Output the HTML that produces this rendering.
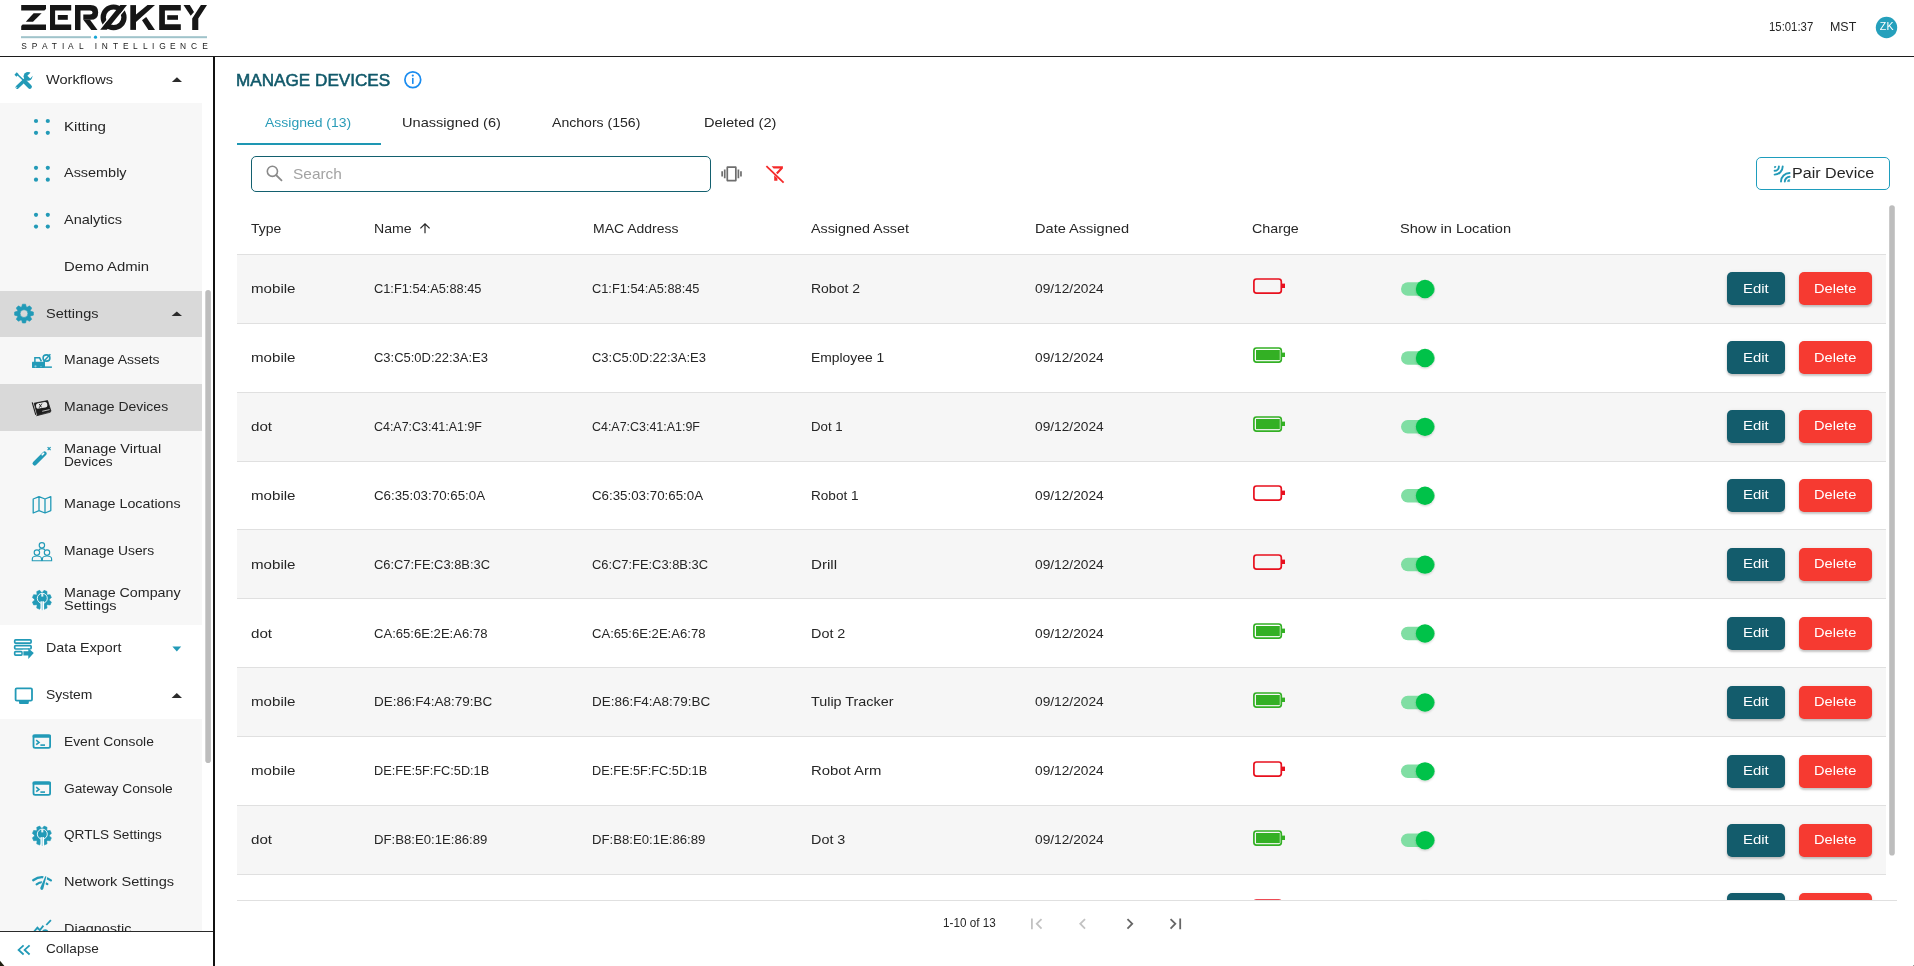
<!DOCTYPE html>
<html><head><meta charset="utf-8"><title>Manage Devices</title>
<style>
html,body{margin:0;padding:0;}
body{width:1914px;height:966px;overflow:hidden;position:relative;background:#fff;font-family:"Liberation Sans",sans-serif;}
.t{position:absolute;white-space:nowrap;line-height:20px;transform-origin:0 0;}
.btn{position:absolute;border-radius:5px;box-shadow:0 2px 2px rgba(0,0,0,0.18),0 1px 4px rgba(0,0,0,0.10);}
#main-clip{position:absolute;left:0;top:0;width:1914px;height:966px;}
</style></head><body>
<svg width="1914" height="966" viewBox="0 0 1914 966" style="position:absolute;left:0;top:0;will-change:transform">
<defs><clipPath id="tblclip"><rect x="0" y="0" width="1914" height="900"/></clipPath><clipPath id="clipdiag"><rect x="0" y="900" width="202" height="31"/></clipPath>
<filter id="sh" x="-50%" y="-50%" width="200%" height="200%"><feDropShadow dx="0" dy="1" stdDeviation="0.8" flood-color="#000" flood-opacity="0.2"/></filter></defs>
<g fill="#161616"><path d="M21.2 5.1H46V9L44.4 10.6H21.2Z"/><path d="M33.6 13.2H41.6L33 21.8H25.8Z"/><path d="M22.6 24.4H46V29.9H21.2V25.9Z"/><path d="M50 5.1H71.2V10.6H55.1V24.4H71.2V29.9H50Z"/><path d="M57.8 15H67.8V19.8H57.8Z"/><path d="M75 5.1H90.5Q98.2 5.1 98.2 12.4Q98.2 19.8 90.5 19.8H83.3V14.4H90Q92.6 14.4 92.6 12.5Q92.6 10.6 90 10.6H80.5V29.9H75Z"/><path d="M83.3 19.8H90L97.5 29.9H91.3Z"/><path fill-rule="evenodd" d="M113.6 4.55A13 12.85 0 1 1 113.6 30.25A13 12.85 0 1 1 113.6 4.55ZM113.6 9.5A7.75 7.75 0 1 0 113.6 25A7.75 7.75 0 1 0 113.6 9.5Z"/><path d="M98.2 29.9H100.2L114.2 12.8H112.2Z" fill="#fff"/><path d="M127 5.1H129L115.2 22H113.2Z" fill="#fff"/><path d="M120.3 5.1H127L106.9 29.75H100.2Z"/><path d="M130.3 5.1H136V29.9H130.3Z"/><path d="M136 14.6L147.5 5.1H155L136 22Z"/><path d="M142 20.3L146.2 17.1L155 29.9H148.4Z"/><path d="M159.2 5.1H180.8V10.6H164.9V24.3H180.8V29.9H159.2Z"/><path d="M167.2 15.2H178V19.8H167.2Z"/><path d="M183.5 5.1H189.8L194 12.1L190.7 15.8Z"/><path d="M200.9 5.1H207L198.3 18.5V29.9H192.2V18.5Z"/></g><rect x="21" y="36.2" width="70" height="2" fill="#9fc3ca"/><circle cx="95.5" cy="37.2" r="1.6" fill="#14a5d6"/><rect x="100" y="36.2" width="107" height="2" fill="#9fc3ca"/><text x="21.2 31.8 41.9 51.7 62 68 79 94.8 101.7 112.9 123.1 133 143 152 159.2 170 180 191 202.2" y="49" font-family="Liberation Sans" font-size="8.4" fill="#222">SPATIALINTELLIGENCE</text><rect x="0" y="56" width="1914" height="1" fill="#1c1c1c"/><circle cx="1886.5" cy="27.5" r="10.7" fill="#25a0bc"/><text x="1886.8" y="29.8" font-family="Liberation Sans" font-size="10.6" fill="#fff" text-anchor="middle" letter-spacing="0.3">ZK</text><rect x="0" y="103" width="202" height="188" fill="#f7f7f7"/><rect x="0" y="291" width="202" height="46" fill="#d9d9d9"/><rect x="0" y="337" width="202" height="288" fill="#f7f7f7"/><rect x="0" y="384" width="202" height="47" fill="#d9d9d9"/><rect x="0" y="719" width="202" height="212" fill="#f7f7f7"/><rect x="205.3" y="290" width="5.6" height="473" rx="2.8" fill="#bdbdbd"/><rect x="213" y="57" width="2" height="909" fill="#111"/><rect x="0" y="931" width="213" height="1" fill="#2a2a2a"/><rect x="0" y="932" width="213" height="34" fill="#fff"/><g stroke="#229ab7" stroke-linecap="round" fill="none"><path d="M18 75L24.5 81.3" stroke-width="1.6"/><path d="M15.6 73.5L17.6 75.5" stroke-width="3.2" stroke-linecap="butt"/><path d="M25.6 82.6L29.8 86.8" stroke-width="4.2"/><path d="M17.2 87.2L25.4 79.4" stroke-width="3.4"/></g><circle cx="28" cy="76.3" r="4.4" fill="#229ab7"/><path d="M27.4 75.8L31.2 72L34 74.6L30.2 78.6Z" fill="#fff"/><circle cx="16.6" cy="87.4" r="0.7" fill="#9fd3e0"/><path d="M171.9 82L176.95 77.3L182 82Z" fill="#2b2b2b"/><circle cx="36" cy="121.0" r="2.1" fill="#229ab7"/><circle cx="36" cy="132.8" r="2.1" fill="#229ab7"/><circle cx="47.8" cy="121.0" r="2.1" fill="#229ab7"/><circle cx="47.8" cy="132.8" r="2.1" fill="#229ab7"/><circle cx="36" cy="167.8" r="2.1" fill="#229ab7"/><circle cx="36" cy="179.7" r="2.1" fill="#229ab7"/><circle cx="47.8" cy="167.8" r="2.1" fill="#229ab7"/><circle cx="47.8" cy="179.7" r="2.1" fill="#229ab7"/><circle cx="36" cy="214.8" r="2.1" fill="#229ab7"/><circle cx="36" cy="226.6" r="2.1" fill="#229ab7"/><circle cx="47.8" cy="214.8" r="2.1" fill="#229ab7"/><circle cx="47.8" cy="226.6" r="2.1" fill="#229ab7"/><path d="M21.70 307.00L22.45 304.20L25.55 304.20L26.30 307.00L27.04 307.31L29.55 305.86L31.74 308.05L30.29 310.56L30.60 311.30L33.40 312.05L33.40 315.15L30.60 315.90L30.29 316.64L31.74 319.15L29.55 321.34L27.04 319.89L26.30 320.20L25.55 323.00L22.45 323.00L21.70 320.20L20.96 319.89L18.45 321.34L16.26 319.15L17.71 316.64L17.40 315.90L14.60 315.15L14.60 312.05L17.40 311.30L17.71 310.56L16.26 308.05L18.45 305.86L20.96 307.31ZM27.90 313.60A3.9 3.9 0 1 0 20.10 313.60A3.9 3.9 0 1 0 27.90 313.60Z" fill="#229ab7" fill-rule="evenodd" stroke="#229ab7" stroke-width="0.6" stroke-linejoin="round"/><path d="M171.6 316L176.8 311.4L182 316Z" fill="#2b2b2b"/><g fill="#229ab7"><rect x="32" y="361.8" width="12.6" height="6.2" rx="0.4"/><path d="M34.9 362V357.8H39.6L41.4 361.4" fill="none" stroke="#229ab7" stroke-width="1.5"/><rect x="44.6" y="366.4" width="7.3" height="1.5"/><rect x="43.7" y="361" width="1.3" height="6.8"/><ellipse cx="46.5" cy="358" rx="3.4" ry="3.1" fill="none" stroke="#229ab7" stroke-width="1.6"/><path d="M43.6 361.6L50.4 354.2" stroke="#229ab7" stroke-width="1.5"/><circle cx="35.5" cy="366.3" r="1.1" fill="#8fcddc"/><circle cx="41" cy="366.6" r="0.6" fill="#8fcddc"/></g><path d="M34.2 403.2L47.6 400.6L51 411.2L37.4 415.2Z" fill="#1c1c1c" stroke="#1c1c1c" stroke-width="0.8" stroke-linejoin="round"/><path d="M32.2 402.4L35.8 414.8" stroke="#1c1c1c" stroke-width="1.1"/><path d="M36.2 415.8L50.5 412.2" stroke="#1c1c1c" stroke-width="0.8"/><path d="M36 405.4Q35.8 403.6 38 403.2L44.8 402Q46.8 401.8 47.1 403.6L47.4 405.2Q47.6 407 45.5 407.4L38.6 408.6Q36.4 409 36.2 407.2Z" fill="#e8e8e8"/><path d="M39.2 404L41.6 407.4M41.9 403.6L39.1 407.8" stroke="#1c1c1c" stroke-width="0.9"/><path d="M42.2 411.3L49.6 409.6" stroke="#cfcfcf" stroke-width="0.9"/><path d="M34.6 463.4L44.6 453.6" stroke="#229ab7" stroke-width="4.2" stroke-linecap="round"/><path d="M42.2 454.8L43.6 453.4" stroke="#fff" stroke-width="1.6" stroke-linecap="round"/><path d="M47.6 447.2L50.6 450.2M50.6 447.2L47.6 450.2" stroke="#229ab7" stroke-width="1.2"/><path d="M33.2 499V513L39 510.6L45 513L50.8 510.6V496.6L45 499L39 496.6Z M39 496.6V510.6 M45 499V513" fill="none" stroke="#229ab7" stroke-width="1.3" stroke-linejoin="round"/><g fill="none" stroke="#229ab7" stroke-width="1.15"><circle cx="41.9" cy="545.3" r="2.7"/><circle cx="36.9" cy="552.6" r="2.7"/><circle cx="47" cy="552.6" r="2.7"/><path d="M32.3 560.7V559Q32.3 556 36.9 556Q41.5 556 41.5 559V560.7Z"/><path d="M42.4 560.7V559Q42.4 556 47 556Q51.6 556 51.6 559V560.7Z"/><path d="M39.3 550Q39.3 548.6 41.9 548.6Q44.5 548.6 44.5 550"/></g><path d="M42.36 592.41L44.10 590.32L47.05 591.54L46.80 594.25L47.45 594.90L50.16 594.65L51.38 597.60L49.29 599.34L49.29 600.26L51.38 602.00L50.16 604.95L47.45 604.70L46.80 605.35L47.05 608.06L44.10 609.28L42.36 607.19L41.44 607.19L39.70 609.28L36.75 608.06L37.00 605.35L36.35 604.70L33.64 604.95L32.42 602.00L34.51 600.26L34.51 599.34L32.42 597.60L33.64 594.65L36.35 594.90L37.00 594.25L36.75 591.54L39.70 590.32L41.44 592.41Z" fill="#229ab7" stroke="#229ab7" stroke-width="0.6" stroke-linejoin="round"/><circle cx="42.30" cy="598.30" r="5.0" fill="none" stroke="#fff" stroke-opacity="0.9" stroke-width="1"/><path d="M42.30 601.30V610.30" stroke="#fff" stroke-width="3.6"/><path d="M42.30 600.80V610.30" stroke="#229ab7" stroke-opacity="0.35" stroke-width="1.4"/><path d="M39.70 595.30A3.1 3.1 0 1 0 44.90 595.30" fill="none" stroke="#229ab7" stroke-width="0"/><rect x="41.30" y="593.40" width="2" height="3.2" fill="#fff" fill-opacity="0.9"/><g fill="none" stroke="#229ab7" stroke-width="1.7"><rect x="14.7" y="639.9" width="16.4" height="3.3" rx="0.9"/><rect x="14.7" y="645.6" width="16.4" height="3.4" rx="0.9"/><rect x="14.7" y="651.6" width="7.4" height="3.6" rx="0.9"/></g><path d="M22.8 649.8H34V660H22.8Z" fill="#fff"/><path d="M23.4 651.2H28.3V648.2L33.8 652.9L28.3 658.9V655.4H23.4Z" fill="#229ab7"/><path d="M172.4 646.6H181.2L176.8 651.5Z" fill="#229ab7"/><rect x="15.6" y="688.4" width="16.4" height="12.2" rx="1.2" fill="none" stroke="#229ab7" stroke-width="1.8"/><rect x="19" y="700.5" width="9.8" height="3.4" rx="0.8" fill="#229ab7"/><path d="M171.6 698L176.8 693L182 698Z" fill="#2b2b2b"/><rect x="33.5" y="735.3" width="16.6" height="12.6" rx="1.6" fill="none" stroke="#229ab7" stroke-width="1.8"/><rect x="32.6" y="734.4" width="18.3" height="3.4" rx="1.2" fill="#229ab7"/><path d="M36.2 740.2L39 742.4L36.2 744.6" fill="none" stroke="#229ab7" stroke-width="1.6"/><rect x="40.4" y="744.3" width="4.6" height="1.6" fill="#229ab7"/><rect x="33.5" y="782.3" width="16.6" height="12.6" rx="1.6" fill="none" stroke="#229ab7" stroke-width="1.8"/><rect x="32.6" y="781.4" width="18.3" height="3.4" rx="1.2" fill="#229ab7"/><path d="M36.2 787.2L39 789.4L36.2 791.6" fill="none" stroke="#229ab7" stroke-width="1.6"/><rect x="40.4" y="791.3" width="4.6" height="1.6" fill="#229ab7"/><path d="M42.36 828.21L44.10 826.12L47.05 827.34L46.80 830.05L47.45 830.70L50.16 830.45L51.38 833.40L49.29 835.14L49.29 836.06L51.38 837.80L50.16 840.75L47.45 840.50L46.80 841.15L47.05 843.86L44.10 845.08L42.36 842.99L41.44 842.99L39.70 845.08L36.75 843.86L37.00 841.15L36.35 840.50L33.64 840.75L32.42 837.80L34.51 836.06L34.51 835.14L32.42 833.40L33.64 830.45L36.35 830.70L37.00 830.05L36.75 827.34L39.70 826.12L41.44 828.21Z" fill="#229ab7" stroke="#229ab7" stroke-width="0.6" stroke-linejoin="round"/><circle cx="42.30" cy="834.10" r="5.0" fill="none" stroke="#fff" stroke-opacity="0.9" stroke-width="1"/><path d="M42.30 837.10V846.10" stroke="#fff" stroke-width="3.6"/><path d="M42.30 836.60V846.10" stroke="#229ab7" stroke-opacity="0.35" stroke-width="1.4"/><path d="M39.70 831.10A3.1 3.1 0 1 0 44.90 831.10" fill="none" stroke="#229ab7" stroke-width="0"/><rect x="41.30" y="829.20" width="2" height="3.2" fill="#fff" fill-opacity="0.9"/><g fill="none" stroke="#229ab7" stroke-linecap="round"><path d="M33.2 880.2Q42 874 50.9 880.4" stroke-width="2.3"/><path d="M36.6 884.4Q42 880.2 47.4 884.2" stroke-width="2.1"/></g><path d="M44.1 874.5L39.4 891L43.9 891L47.9 874.5Z" fill="#f7f7f7"/><path d="M45.3 876.2L46.4 876.4L43.4 888.6Q42.8 890.4 41.2 889.8Q40 889.3 40.4 887.6Z" fill="#229ab7"/><g clip-path="url(#clipdiag)" fill="none" stroke="#229ab7" stroke-width="1.8"><path d="M33.8 932L37.4 927.6L39.8 930.2L43.4 925.6"/><path d="M46.3 925L50.9 920.1"/><circle cx="45.2" cy="932.6" r="2.5" stroke-width="1.6"/></g><path d="M23.6 945.3L18.6 949.9L23.6 954.5M29.6 945.3L24.6 949.9L29.6 954.5" fill="none" stroke="#229ab7" stroke-width="1.8"/><path d="M0 960.8L4.4 966H0Z" fill="#1e1e10"/><circle cx="412.8" cy="79.8" r="7.9" fill="none" stroke="#1a8cf0" stroke-width="1.7"/><circle cx="412.8" cy="75.6" r="1.1" fill="#1a8cf0"/><rect x="412" y="77.9" width="1.6" height="6" fill="#1a8cf0"/><rect x="237" y="143" width="144" height="2" fill="#1e97b3"/><circle cx="272.4" cy="171.3" r="5.1" fill="none" stroke="#8a8a8a" stroke-width="1.6"/><path d="M276 175L282 180.8" stroke="#8a8a8a" stroke-width="1.8"/><path transform="translate(721.3 163.6) scale(0.855)" d="M0 15h2V9H0v6zm3 2h2V7H3v10zm19-8v6h2V9h-2zm-3 8h2V7h-2v10zM16.5 3h-9C6.67 3 6 3.67 6 4.5v15c0 .83.67 1.5 1.5 1.5h9c.83 0 1.5-.67 1.5-1.5v-15c0-.83-.67-1.5-1.5-1.5zM16 19H8V5h8v14z" fill="#6e6e6e"/><path d="M766.4 166.1L783.6 182.6" stroke="#f52a2a" stroke-width="1.8"/><path d="M771.6 166.3H782.9V168.4L777.6 174.3L776 172.7L780 168.4H773.6Z" fill="#f52a2a"/><path d="M774.2 175.2L777.4 178.3V180.7H774.2Z" fill="#f52a2a"/><g fill="none" stroke="#229ab7" stroke-width="1.9" stroke-linecap="round"><path d="M1778.90 166.50A4.3 4.3 0 0 1 1774.60 170.80"/><path d="M1782.70 166.50A8.1 8.1 0 0 1 1774.60 174.60"/><path d="M1784.80 181.60A4.8 4.8 0 0 1 1789.60 176.80"/><path d="M1781.00 181.60A8.6 8.6 0 0 1 1789.60 173.00"/></g><path d="M1774.60 166.50H1775.80A1.2 1.2 0 0 1 1774.60 167.70Z" fill="#229ab7" stroke="#229ab7" stroke-width="0.9"/><path d="M1789.60 181.60H1787.40A2.2 2.2 0 0 1 1789.60 179.40Z" fill="#229ab7" stroke="#229ab7" stroke-width="0.5"/><path d="M420.4 228.4L425 223.8L429.6 228.4M425 224V233.2" fill="none" stroke="#262626" stroke-width="1.2"/><g clip-path="url(#tblclip)"><rect x="237" y="255" width="1649" height="68" fill="#f6f6f6"/><rect x="237" y="254" width="1649" height="1" fill="#e0e0e0"/><rect x="1253.9" y="279.00" width="27.4" height="14.2" rx="2.6" fill="none" stroke="#e8101e" stroke-width="1.7"/><rect x="1282" y="283.60" width="3" height="4.4" fill="#e8101e"/><rect x="1401" y="282.25" width="34" height="13.5" rx="6.75" fill="#80dea3"/><circle cx="1425" cy="289.05" r="9.2" fill="#00c24a" filter="url(#sh)"/><rect x="237" y="323" width="1649" height="1" fill="#e0e0e0"/><rect x="1253.9" y="348.00" width="27.4" height="14.2" rx="2.6" fill="none" stroke="#33b024" stroke-width="1.7"/><rect x="1282" y="352.60" width="3" height="4.4" fill="#33b024"/><rect x="1256" y="350.00" width="23.8" height="10.1" fill="#33b024"/><rect x="1401" y="351.15" width="34" height="13.5" rx="6.75" fill="#80dea3"/><circle cx="1425" cy="357.95" r="9.2" fill="#00c24a" filter="url(#sh)"/><rect x="237" y="393" width="1649" height="68" fill="#f6f6f6"/><rect x="237" y="392" width="1649" height="1" fill="#e0e0e0"/><rect x="1253.9" y="417.00" width="27.4" height="14.2" rx="2.6" fill="none" stroke="#33b024" stroke-width="1.7"/><rect x="1282" y="421.60" width="3" height="4.4" fill="#33b024"/><rect x="1256" y="419.00" width="23.8" height="10.1" fill="#33b024"/><rect x="1401" y="420.05" width="34" height="13.5" rx="6.75" fill="#80dea3"/><circle cx="1425" cy="426.85" r="9.2" fill="#00c24a" filter="url(#sh)"/><rect x="237" y="461" width="1649" height="1" fill="#e0e0e0"/><rect x="1253.9" y="486.00" width="27.4" height="14.2" rx="2.6" fill="none" stroke="#e8101e" stroke-width="1.7"/><rect x="1282" y="490.60" width="3" height="4.4" fill="#e8101e"/><rect x="1401" y="488.95" width="34" height="13.5" rx="6.75" fill="#80dea3"/><circle cx="1425" cy="495.75" r="9.2" fill="#00c24a" filter="url(#sh)"/><rect x="237" y="530" width="1649" height="68" fill="#f6f6f6"/><rect x="237" y="529" width="1649" height="1" fill="#e0e0e0"/><rect x="1253.9" y="555.00" width="27.4" height="14.2" rx="2.6" fill="none" stroke="#e8101e" stroke-width="1.7"/><rect x="1282" y="559.60" width="3" height="4.4" fill="#e8101e"/><rect x="1401" y="557.85" width="34" height="13.5" rx="6.75" fill="#80dea3"/><circle cx="1425" cy="564.65" r="9.2" fill="#00c24a" filter="url(#sh)"/><rect x="237" y="598" width="1649" height="1" fill="#e0e0e0"/><rect x="1253.9" y="624.00" width="27.4" height="14.2" rx="2.6" fill="none" stroke="#33b024" stroke-width="1.7"/><rect x="1282" y="628.60" width="3" height="4.4" fill="#33b024"/><rect x="1256" y="626.00" width="23.8" height="10.1" fill="#33b024"/><rect x="1401" y="626.75" width="34" height="13.5" rx="6.75" fill="#80dea3"/><circle cx="1425" cy="633.55" r="9.2" fill="#00c24a" filter="url(#sh)"/><rect x="237" y="668" width="1649" height="68" fill="#f6f6f6"/><rect x="237" y="667" width="1649" height="1" fill="#e0e0e0"/><rect x="1253.9" y="693.00" width="27.4" height="14.2" rx="2.6" fill="none" stroke="#33b024" stroke-width="1.7"/><rect x="1282" y="697.60" width="3" height="4.4" fill="#33b024"/><rect x="1256" y="695.00" width="23.8" height="10.1" fill="#33b024"/><rect x="1401" y="695.65" width="34" height="13.5" rx="6.75" fill="#80dea3"/><circle cx="1425" cy="702.45" r="9.2" fill="#00c24a" filter="url(#sh)"/><rect x="237" y="736" width="1649" height="1" fill="#e0e0e0"/><rect x="1253.9" y="762.00" width="27.4" height="14.2" rx="2.6" fill="none" stroke="#e8101e" stroke-width="1.7"/><rect x="1282" y="766.60" width="3" height="4.4" fill="#e8101e"/><rect x="1401" y="764.55" width="34" height="13.5" rx="6.75" fill="#80dea3"/><circle cx="1425" cy="771.35" r="9.2" fill="#00c24a" filter="url(#sh)"/><rect x="237" y="806" width="1649" height="68" fill="#f6f6f6"/><rect x="237" y="805" width="1649" height="1" fill="#e0e0e0"/><rect x="1253.9" y="831.00" width="27.4" height="14.2" rx="2.6" fill="none" stroke="#33b024" stroke-width="1.7"/><rect x="1282" y="835.60" width="3" height="4.4" fill="#33b024"/><rect x="1256" y="833.00" width="23.8" height="10.1" fill="#33b024"/><rect x="1401" y="833.45" width="34" height="13.5" rx="6.75" fill="#80dea3"/><circle cx="1425" cy="840.25" r="9.2" fill="#00c24a" filter="url(#sh)"/><rect x="237" y="874" width="1649" height="1" fill="#e0e0e0"/><rect x="1253.9" y="900.00" width="27.4" height="14.2" rx="2.6" fill="none" stroke="#e8101e" stroke-width="1.7"/><rect x="1282" y="904.60" width="3" height="4.4" fill="#e8101e"/><rect x="1401" y="902.35" width="34" height="13.5" rx="6.75" fill="#80dea3"/><circle cx="1425" cy="909.15" r="9.2" fill="#00c24a" filter="url(#sh)"/></g><rect x="237" y="900" width="1660" height="1" fill="#e0e0e0"/><rect x="1913" y="965" width="1" height="1" fill="#9a9a9a"/><rect x="1889.2" y="205.2" width="5.6" height="650.4" rx="2.8" fill="#bdbdbd"/><path transform="translate(1025.6 913) scale(0.9)" d="M18.41 16.59L13.82 12l4.59-4.59L17 6l-6 6 6 6zM6 6h2v12H6z" fill="#c2c2c2"/><path transform="translate(1071.8 913) scale(0.9)" d="M15.41 7.41L14 6l-6 6 6 6 1.41-1.41L10.83 12z" fill="#c2c2c2"/><path transform="translate(1119.1 913) scale(0.9)" d="M10 6L8.59 7.41 13.17 12l-4.58 4.59L10 18l6-6z" fill="#666"/><path transform="translate(1164.9 913) scale(0.9)" d="M5.59 7.41L10.18 12l-4.59 4.59L7 18l6-6-6-6zM16 6h2v12h-2z" fill="#666"/>
</svg>
<div class="t" style="left:1769.20px;top:17.00px;font-size:13px;color:#262626;transform:scaleX(0.8735);">15:01:37</div><div class="t" style="left:1830.30px;top:17.00px;font-size:13px;color:#262626;transform:scaleX(0.9562);">MST</div><div class="t" style="left:45.80px;top:70.00px;font-size:13px;color:#262626;transform:scaleX(1.1223);">Workflows</div><div class="t" style="left:64.10px;top:117.00px;font-size:13px;color:#262626;transform:scaleX(1.1607);">Kitting</div><div class="t" style="left:63.80px;top:163.00px;font-size:13px;color:#262626;transform:scaleX(1.1101);">Assembly</div><div class="t" style="left:63.80px;top:210.00px;font-size:13px;color:#262626;transform:scaleX(1.1154);">Analytics</div><div class="t" style="left:63.70px;top:257.00px;font-size:13px;color:#262626;transform:scaleX(1.1438);">Demo Admin</div><div class="t" style="left:45.60px;top:304.00px;font-size:13px;color:#262626;transform:scaleX(1.1170);">Settings</div><div class="t" style="left:63.90px;top:350.00px;font-size:13px;color:#262626;transform:scaleX(1.0754);">Manage Assets</div><div class="t" style="left:63.90px;top:397.00px;font-size:13px;color:#262626;transform:scaleX(1.0754);">Manage Devices</div><div class="t" style="left:63.90px;top:439.00px;font-size:13px;color:#262626;transform:scaleX(1.1135);">Manage Virtual</div><div class="t" style="left:63.90px;top:452.00px;font-size:13px;color:#262626;transform:scaleX(1.0498);">Devices</div><div class="t" style="left:63.90px;top:494.00px;font-size:13px;color:#262626;transform:scaleX(1.0970);">Manage Locations</div><div class="t" style="left:63.90px;top:541.00px;font-size:13px;color:#262626;transform:scaleX(1.0663);">Manage Users</div><div class="t" style="left:63.90px;top:583.00px;font-size:13px;color:#262626;transform:scaleX(1.0979);">Manage Company</div><div class="t" style="left:63.90px;top:596.00px;font-size:13px;color:#262626;transform:scaleX(1.1170);">Settings</div><div class="t" style="left:46.10px;top:638.00px;font-size:13px;color:#262626;transform:scaleX(1.0977);">Data Export</div><div class="t" style="left:45.60px;top:685.00px;font-size:13px;color:#262626;transform:scaleX(1.0693);">System</div><div class="t" style="left:63.90px;top:732.00px;font-size:13px;color:#262626;transform:scaleX(1.0627);">Event Console</div><div class="t" style="left:63.90px;top:779.00px;font-size:13px;color:#262626;transform:scaleX(1.0595);">Gateway Console</div><div class="t" style="left:63.90px;top:825.00px;font-size:13px;color:#262626;transform:scaleX(1.0448);">QRTLS Settings</div><div class="t" style="left:64.10px;top:872.00px;font-size:13px;color:#262626;transform:scaleX(1.1200);">Network Settings</div><div style="position:absolute;left:0;top:918px;width:202px;height:13px;overflow:hidden"><div class="t" style="left:64.2px;top:0.5px;font-size:13px;color:#262626;transform:scaleX(1.1104)">Diagnostic</div></div><div class="t" style="left:45.70px;top:939.00px;font-size:13px;color:#262626;transform:scaleX(1.0435);">Collapse</div><div class="t" style="left:235.70px;top:71.00px;font-size:17px;color:#11596a;transform:scaleX(1.0078);-webkit-text-stroke:0.55px #11596a;">MANAGE DEVICES</div><div class="t" style="left:264.60px;top:113.00px;font-size:13px;color:#2a9cb8;transform:scaleX(1.0748);">Assigned (13)</div><div class="t" style="left:402.40px;top:113.00px;font-size:13px;color:#262626;transform:scaleX(1.1213);">Unassigned (6)</div><div class="t" style="left:551.70px;top:113.00px;font-size:13px;color:#262626;transform:scaleX(1.0820);">Anchors (156)</div><div class="t" style="left:703.80px;top:113.00px;font-size:13px;color:#262626;transform:scaleX(1.1260);">Deleted (2)</div><div style="position:absolute;left:251px;top:156px;width:458px;height:34px;border:1px solid #13606f;border-radius:5px;"></div><div class="t" style="left:292.50px;top:164.00px;font-size:15px;color:#a3a3a3;transform:scaleX(1.0295);">Search</div><div style="position:absolute;left:1756px;top:157px;width:132px;height:31px;border:1px solid #1e9dbd;border-radius:5px;"></div><div class="t" style="left:1792.30px;top:163.00px;font-size:14px;color:#262626;transform:scaleX(1.1480);">Pair Device</div><div class="t" style="left:250.60px;top:219.00px;font-size:13px;color:#262626;transform:scaleX(1.0745);">Type</div><div class="t" style="left:374.20px;top:219.00px;font-size:13px;color:#262626;transform:scaleX(1.0865);">Name</div><div class="t" style="left:592.80px;top:219.00px;font-size:13px;color:#262626;transform:scaleX(1.0755);">MAC Address</div><div class="t" style="left:810.90px;top:219.00px;font-size:13px;color:#262626;transform:scaleX(1.1012);">Assigned Asset</div><div class="t" style="left:1034.60px;top:219.00px;font-size:13px;color:#262626;transform:scaleX(1.1217);">Date Assigned</div><div class="t" style="left:1252.00px;top:219.00px;font-size:13px;color:#262626;transform:scaleX(1.0962);">Charge</div><div class="t" style="left:1399.70px;top:219.00px;font-size:13px;color:#262626;transform:scaleX(1.1212);">Show in Location</div><div style="position:absolute;left:0;top:0;width:1914px;height:900px;overflow:hidden"><div class="t" style="left:250.80px;top:279.00px;font-size:13px;color:#262626;transform:scaleX(1.1619);">mobile</div><div class="t" style="left:373.80px;top:279.00px;font-size:13px;color:#262626;transform:scaleX(0.9844);">C1:F1:54:A5:88:45</div><div class="t" style="left:592.30px;top:279.00px;font-size:13px;color:#262626;transform:scaleX(0.9844);">C1:F1:54:A5:88:45</div><div class="t" style="left:810.80px;top:279.00px;font-size:13px;color:#262626;transform:scaleX(1.0747);">Robot 2</div><div class="t" style="left:1034.50px;top:279.00px;font-size:13px;color:#262626;transform:scaleX(1.0553);">09/12/2024</div><div class="btn" style="left:1727px;top:272px;width:58px;height:33px;background:#135c6c;"></div><div class="btn" style="left:1799px;top:272px;width:73px;height:33px;background:#f63a31;"></div><div class="t" style="left:1742.50px;top:279.00px;font-size:13px;color:#fff;transform:scaleX(1.1473);">Edit</div><div class="t" style="left:1814.00px;top:279.00px;font-size:13px;color:#fff;transform:scaleX(1.1250);">Delete</div><div class="t" style="left:250.80px;top:348.00px;font-size:13px;color:#262626;transform:scaleX(1.1619);">mobile</div><div class="t" style="left:373.80px;top:348.00px;font-size:13px;color:#262626;transform:scaleX(0.9974);">C3:C5:0D:22:3A:E3</div><div class="t" style="left:592.30px;top:348.00px;font-size:13px;color:#262626;transform:scaleX(0.9974);">C3:C5:0D:22:3A:E3</div><div class="t" style="left:810.80px;top:348.00px;font-size:13px;color:#262626;transform:scaleX(1.0656);">Employee 1</div><div class="t" style="left:1034.50px;top:348.00px;font-size:13px;color:#262626;transform:scaleX(1.0553);">09/12/2024</div><div class="btn" style="left:1727px;top:341px;width:58px;height:33px;background:#135c6c;"></div><div class="btn" style="left:1799px;top:341px;width:73px;height:33px;background:#f63a31;"></div><div class="t" style="left:1742.50px;top:348.00px;font-size:13px;color:#fff;transform:scaleX(1.1473);">Edit</div><div class="t" style="left:1814.00px;top:348.00px;font-size:13px;color:#fff;transform:scaleX(1.1250);">Delete</div><div class="t" style="left:250.80px;top:417.00px;font-size:13px;color:#262626;transform:scaleX(1.1657);">dot</div><div class="t" style="left:373.80px;top:417.00px;font-size:13px;color:#262626;transform:scaleX(0.9574);">C4:A7:C3:41:A1:9F</div><div class="t" style="left:592.30px;top:417.00px;font-size:13px;color:#262626;transform:scaleX(0.9574);">C4:A7:C3:41:A1:9F</div><div class="t" style="left:810.80px;top:417.00px;font-size:13px;color:#262626;transform:scaleX(1.0193);">Dot 1</div><div class="t" style="left:1034.50px;top:417.00px;font-size:13px;color:#262626;transform:scaleX(1.0553);">09/12/2024</div><div class="btn" style="left:1727px;top:410px;width:58px;height:33px;background:#135c6c;"></div><div class="btn" style="left:1799px;top:410px;width:73px;height:33px;background:#f63a31;"></div><div class="t" style="left:1742.50px;top:416.00px;font-size:13px;color:#fff;transform:scaleX(1.1473);">Edit</div><div class="t" style="left:1814.00px;top:416.00px;font-size:13px;color:#fff;transform:scaleX(1.1250);">Delete</div><div class="t" style="left:250.80px;top:486.00px;font-size:13px;color:#262626;transform:scaleX(1.1619);">mobile</div><div class="t" style="left:373.80px;top:486.00px;font-size:13px;color:#262626;transform:scaleX(1.0240);">C6:35:03:70:65:0A</div><div class="t" style="left:592.30px;top:486.00px;font-size:13px;color:#262626;transform:scaleX(1.0240);">C6:35:03:70:65:0A</div><div class="t" style="left:810.80px;top:486.00px;font-size:13px;color:#262626;transform:scaleX(1.0440);">Robot 1</div><div class="t" style="left:1034.50px;top:486.00px;font-size:13px;color:#262626;transform:scaleX(1.0553);">09/12/2024</div><div class="btn" style="left:1727px;top:479px;width:58px;height:33px;background:#135c6c;"></div><div class="btn" style="left:1799px;top:479px;width:73px;height:33px;background:#f63a31;"></div><div class="t" style="left:1742.50px;top:485.00px;font-size:13px;color:#fff;transform:scaleX(1.1473);">Edit</div><div class="t" style="left:1814.00px;top:485.00px;font-size:13px;color:#fff;transform:scaleX(1.1250);">Delete</div><div class="t" style="left:250.80px;top:555.00px;font-size:13px;color:#262626;transform:scaleX(1.1619);">mobile</div><div class="t" style="left:373.80px;top:555.00px;font-size:13px;color:#262626;transform:scaleX(0.9906);">C6:C7:FE:C3:8B:3C</div><div class="t" style="left:592.30px;top:555.00px;font-size:13px;color:#262626;transform:scaleX(0.9906);">C6:C7:FE:C3:8B:3C</div><div class="t" style="left:810.80px;top:555.00px;font-size:13px;color:#262626;transform:scaleX(1.1652);">Drill</div><div class="t" style="left:1034.50px;top:555.00px;font-size:13px;color:#262626;transform:scaleX(1.0553);">09/12/2024</div><div class="btn" style="left:1727px;top:548px;width:58px;height:33px;background:#135c6c;"></div><div class="btn" style="left:1799px;top:548px;width:73px;height:33px;background:#f63a31;"></div><div class="t" style="left:1742.50px;top:554.00px;font-size:13px;color:#fff;transform:scaleX(1.1473);">Edit</div><div class="t" style="left:1814.00px;top:554.00px;font-size:13px;color:#fff;transform:scaleX(1.1250);">Delete</div><div class="t" style="left:250.80px;top:624.00px;font-size:13px;color:#262626;transform:scaleX(1.1657);">dot</div><div class="t" style="left:373.80px;top:624.00px;font-size:13px;color:#262626;transform:scaleX(1.0062);">CA:65:6E:2E:A6:78</div><div class="t" style="left:592.30px;top:624.00px;font-size:13px;color:#262626;transform:scaleX(1.0062);">CA:65:6E:2E:A6:78</div><div class="t" style="left:810.80px;top:624.00px;font-size:13px;color:#262626;transform:scaleX(1.1061);">Dot 2</div><div class="t" style="left:1034.50px;top:624.00px;font-size:13px;color:#262626;transform:scaleX(1.0553);">09/12/2024</div><div class="btn" style="left:1727px;top:617px;width:58px;height:33px;background:#135c6c;"></div><div class="btn" style="left:1799px;top:617px;width:73px;height:33px;background:#f63a31;"></div><div class="t" style="left:1742.50px;top:623.00px;font-size:13px;color:#fff;transform:scaleX(1.1473);">Edit</div><div class="t" style="left:1814.00px;top:623.00px;font-size:13px;color:#fff;transform:scaleX(1.1250);">Delete</div><div class="t" style="left:250.80px;top:692.00px;font-size:13px;color:#262626;transform:scaleX(1.1619);">mobile</div><div class="t" style="left:373.80px;top:692.00px;font-size:13px;color:#262626;transform:scaleX(1.0350);">DE:86:F4:A8:79:BC</div><div class="t" style="left:592.30px;top:692.00px;font-size:13px;color:#262626;transform:scaleX(1.0350);">DE:86:F4:A8:79:BC</div><div class="t" style="left:810.80px;top:692.00px;font-size:13px;color:#262626;transform:scaleX(1.1046);">Tulip Tracker</div><div class="t" style="left:1034.50px;top:692.00px;font-size:13px;color:#262626;transform:scaleX(1.0553);">09/12/2024</div><div class="btn" style="left:1727px;top:686px;width:58px;height:33px;background:#135c6c;"></div><div class="btn" style="left:1799px;top:686px;width:73px;height:33px;background:#f63a31;"></div><div class="t" style="left:1742.50px;top:692.00px;font-size:13px;color:#fff;transform:scaleX(1.1473);">Edit</div><div class="t" style="left:1814.00px;top:692.00px;font-size:13px;color:#fff;transform:scaleX(1.1250);">Delete</div><div class="t" style="left:250.80px;top:761.00px;font-size:13px;color:#262626;transform:scaleX(1.1619);">mobile</div><div class="t" style="left:373.80px;top:761.00px;font-size:13px;color:#262626;transform:scaleX(0.9779);">DE:FE:5F:FC:5D:1B</div><div class="t" style="left:592.30px;top:761.00px;font-size:13px;color:#262626;transform:scaleX(0.9779);">DE:FE:5F:FC:5D:1B</div><div class="t" style="left:810.80px;top:761.00px;font-size:13px;color:#262626;transform:scaleX(1.1450);">Robot Arm</div><div class="t" style="left:1034.50px;top:761.00px;font-size:13px;color:#262626;transform:scaleX(1.0553);">09/12/2024</div><div class="btn" style="left:1727px;top:755px;width:58px;height:33px;background:#135c6c;"></div><div class="btn" style="left:1799px;top:755px;width:73px;height:33px;background:#f63a31;"></div><div class="t" style="left:1742.50px;top:761.00px;font-size:13px;color:#fff;transform:scaleX(1.1473);">Edit</div><div class="t" style="left:1814.00px;top:761.00px;font-size:13px;color:#fff;transform:scaleX(1.1250);">Delete</div><div class="t" style="left:250.80px;top:830.00px;font-size:13px;color:#262626;transform:scaleX(1.1657);">dot</div><div class="t" style="left:373.80px;top:830.00px;font-size:13px;color:#262626;transform:scaleX(1.0125);">DF:B8:E0:1E:86:89</div><div class="t" style="left:592.30px;top:830.00px;font-size:13px;color:#262626;transform:scaleX(1.0125);">DF:B8:E0:1E:86:89</div><div class="t" style="left:810.80px;top:830.00px;font-size:13px;color:#262626;transform:scaleX(1.1061);">Dot 3</div><div class="t" style="left:1034.50px;top:830.00px;font-size:13px;color:#262626;transform:scaleX(1.0553);">09/12/2024</div><div class="btn" style="left:1727px;top:824px;width:58px;height:33px;background:#135c6c;"></div><div class="btn" style="left:1799px;top:824px;width:73px;height:33px;background:#f63a31;"></div><div class="t" style="left:1742.50px;top:830.00px;font-size:13px;color:#fff;transform:scaleX(1.1473);">Edit</div><div class="t" style="left:1814.00px;top:830.00px;font-size:13px;color:#fff;transform:scaleX(1.1250);">Delete</div><div class="btn" style="left:1727px;top:893px;width:58px;height:33px;background:#135c6c;"></div><div class="btn" style="left:1799px;top:893px;width:73px;height:33px;background:#f63a31;"></div></div><div class="t" style="left:943.20px;top:913.00px;font-size:13px;color:#262626;transform:scaleX(0.8991);">1-10 of 13</div>
</body></html>
